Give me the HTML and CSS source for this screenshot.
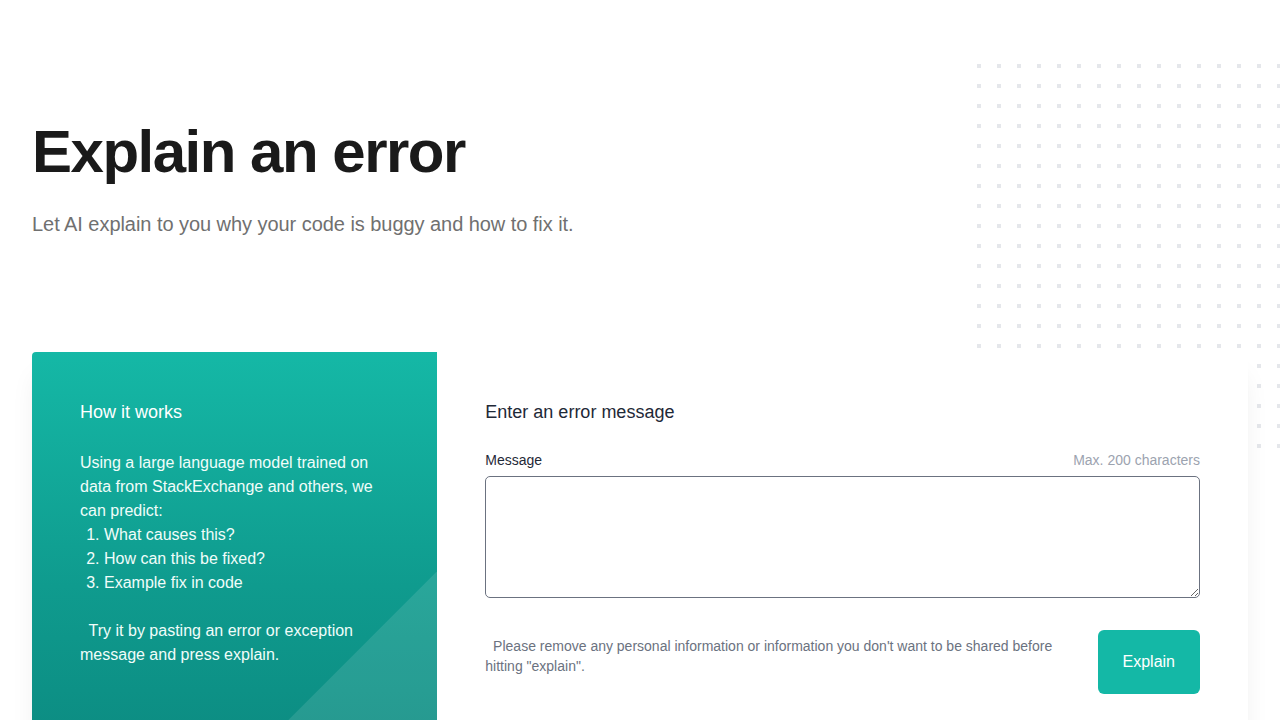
FILE: index.html
```html
<!DOCTYPE html>
<html lang="en">
<head>
<meta charset="utf-8">
<title>Explain an error</title>
<link rel="stylesheet" href="styles.css">
</head>
<body>
<main class="page">
  <svg class="dots" width="404" height="384" viewBox="0 0 404 384" aria-hidden="true">
    <defs>
      <pattern id="dot-grid" x="0" y="0" width="20" height="20" patternUnits="userSpaceOnUse">
        <rect x="0" y="0" width="4" height="4" fill="#e5e7eb"></rect>
      </pattern>
    </defs>
    <rect width="404" height="384" fill="url(#dot-grid)"></rect>
  </svg>

  <header class="hero">
    <h1 class="hero-title">Explain an error</h1>
    <p class="hero-sub">Let AI explain to you why your code is buggy and how to fix it.</p>
  </header>

  <section class="card">
    <div class="info">
      <div class="info-shine"></div>
      <h3 class="info-title">How it works</h3>
      <p class="info-text info-first">Using a large language model trained on data from StackExchange and others, we can predict:</p>
      <ol class="info-list">
        <li>What causes this?</li>
        <li>How can this be fixed?</li>
        <li>Example fix in code</li>
      </ol>
      <p class="info-text info-try">&nbsp; Try it by pasting an error or exception message and press explain.</p>
    </div>

    <div class="form">
      <h3 class="form-title">Enter an error message</h3>
      <div class="field">
        <div class="field-head">
          <label class="field-label" for="message">Message</label>
          <span class="field-hint">Max. 200 characters</span>
        </div>
        <textarea id="message" class="field-input" rows="4"></textarea>
      </div>
      <div class="actions">
        <p class="notice">&nbsp; Please remove any personal information or information you don't want to be shared before hitting "explain".</p>
        <button class="btn" type="button">Explain</button>
      </div>
    </div>
  </section>
</main>
</body>
</html>
```

FILE: styles.css
```css
html, body {
  margin: 0;
  padding: 0;
  background: #ffffff;
}

body {
  font-family: "Liberation Sans", Arial, sans-serif;
  color: #111827;
}

.page {
  position: relative;
  overflow: hidden;
  padding: 0 32px;
  min-height: 760px;
}

.dots {
  position: absolute;
  left: 977px;
  top: 64px;
  z-index: 0;
}

.hero {
  position: relative;
  z-index: 1;
  padding-top: 122px;
}

.hero-title {
  margin: 0;
  font-size: 60px;
  line-height: 60px;
  font-weight: 700;
  letter-spacing: -1.5px;
  color: #1a1a1a;
}

.hero-sub {
  margin: 28px 0 0;
  font-size: 20px;
  line-height: 28px;
  letter-spacing: -0.05px;
  color: #707070;
}

.card {
  position: relative;
  z-index: 1;
  margin-top: 114px;
  display: grid;
  grid-template-columns: 1fr 2fr;
  background: #ffffff;
  box-shadow: 0 20px 25px -5px rgba(0, 0, 0, 0.08), 0 10px 10px -5px rgba(0, 0, 0, 0.03);
}

.info {
  position: relative;
  overflow: hidden;
  padding: 46px 48px 48px;
  border-top-left-radius: 4px;
  background: linear-gradient(180deg, #15b8a6 0%, #0f9b8e 60%, #0c8c82 100%);
  color: #ffffff;
}

.info-shine {
  position: absolute;
  right: 0;
  bottom: 0;
  width: 171px;
  height: 171px;
  clip-path: polygon(100% 0, 100% 100%, 0 100%);
  background: rgba(255, 255, 255, 0.11);
}

.info-title {
  position: relative;
  margin: 0;
  font-size: 18px;
  line-height: 28px;
  font-weight: 400;
  color: #ffffff;
}

.info-text {
  position: relative;
  margin: 24px 0 0;
  font-size: 16px;
  line-height: 24px;
  color: #f0fdfa;
}

.info-first {
  margin-top: 25px;
}

.info-list {
  position: relative;
  margin: 0;
  padding-left: 24px;
  font-size: 16px;
  line-height: 24px;
  color: #f0fdfa;
}

.info-try {
  margin-top: 24px;
}

.form {
  padding: 46px 48px 48px;
}

.form-title {
  margin: 0;
  font-size: 18px;
  line-height: 28px;
  font-weight: 400;
  color: #1f2937;
}

.field {
  margin-top: 24px;
}

.field-head {
  display: flex;
  justify-content: space-between;
  font-size: 14px;
  line-height: 20px;
}

.field-label {
  color: #1f2937;
}

.field-hint {
  color: #9ca3af;
}

.field-input {
  display: block;
  box-sizing: border-box;
  width: 100%;
  height: 122px;
  margin-top: 6px;
  padding: 8px 12px;
  border: 1px solid #6b7280;
  border-radius: 5px;
  font-family: "Liberation Sans", Arial, sans-serif;
  font-size: 16px;
  background: #ffffff;
}

.actions {
  display: flex;
  align-items: flex-start;
  margin-top: 32px;
}

.notice {
  flex: 1;
  margin: 6px 40px 0 0;
  font-size: 14px;
  line-height: 20px;
  color: #6b7280;
}

.btn {
  flex: none;
  padding: 20px 25px;
  border: none;
  border-radius: 6px;
  background: #14b8a6;
  color: #ffffff;
  font-family: "Liberation Sans", Arial, sans-serif;
  font-size: 16px;
  line-height: 24px;
  cursor: pointer;
}
```
